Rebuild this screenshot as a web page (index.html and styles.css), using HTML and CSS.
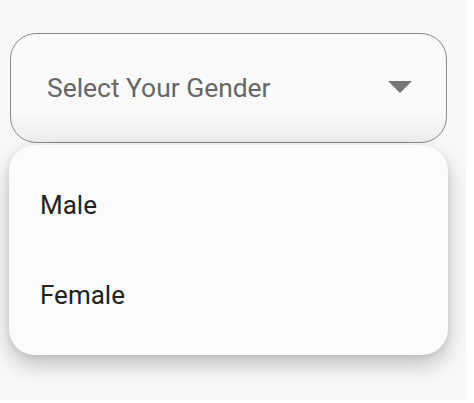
FILE: index.html
```html
<!DOCTYPE html>
<html>
<head>
<meta charset="utf-8">
<link rel="stylesheet" href="styles.css">
</head>
<body>
<div class="page">
  <div class="select">
    <span class="placeholder">Select Your Gender</span>
    <svg class="arrow" width="24" height="12" viewBox="0 0 24 12"><path d="M0 0 L24 0 L12 12 Z" fill="#777"/></svg>
  </div>
  <div class="menu">
    <div class="item">Male</div>
    <div class="item">Female</div>
  </div>
</div>
</body>
</html>
```
FILE: styles.css
```css
html, body {
  margin: 0;
  padding: 0;
  background: #ffffff;
}
.page {
  width: 466px;
  height: 400px;
  background: #f8f8f8;
  padding-top: 33px;
  box-sizing: border-box;
  font-family: Roboto, "Liberation Sans", sans-serif;
  overflow: hidden;
}
.select {
  margin-left: 10px;
  width: 437px;
  height: 110px;
  box-sizing: border-box;
  border: 1.5px solid #8a8a8a;
  border-radius: 26px;
  display: flex;
  align-items: center;
  justify-content: space-between;
  padding: 0 34px 0 36px;
  background: linear-gradient(#fafafa 70%, #eeeeee);
}
.placeholder {
  font-size: 26.4px;
  color: #666666;
}
.arrow {
  display: block;
  margin-top: -2px;
}
.menu {
  margin-top: 2px;
  margin-left: 9px;
  width: 439px;
  height: 210px;
  box-sizing: border-box;
  padding: 15px 0;
  background: #fbfbfb;
  border-radius: 26px;
  box-shadow: 0 10px 22px rgba(0,0,0,0.22), 0 2px 6px rgba(0,0,0,0.08);
}
.item {
  height: 90px;
  line-height: 90px;
  padding-left: 31px;
  font-size: 26px;
  color: #222222;
}
```
